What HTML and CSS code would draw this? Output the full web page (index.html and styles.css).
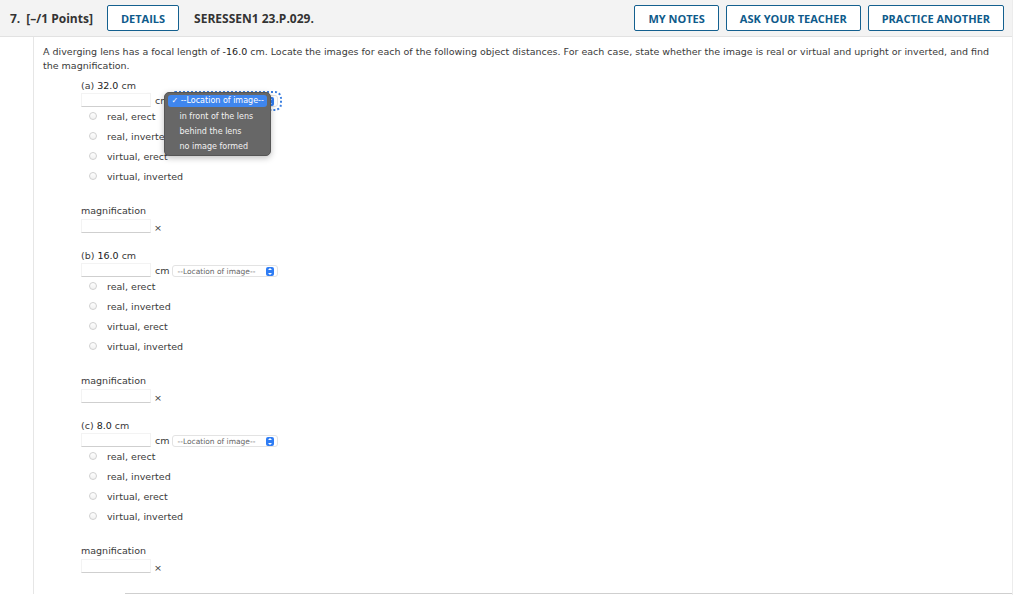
FILE: index.html
```html
<!DOCTYPE html>
<html lang="en">
<head>
  <meta charset="UTF-8" />
  <title>Question 7</title>
  <link rel="stylesheet" href="styles.css">
</head>
<body>
  <div class="page">
    <div class="qhead">
      <div class="qhead-left">
        <span class="qnum">7.</span>
        <span class="points">[&ndash;/1 Points]</span>
        <button class="btn">DETAILS</button>
        <span class="qid">SERESSEN1 23.P.029.</span>
      </div>
      <div class="qhead-right">
        <button class="btn">MY NOTES</button>
        <button class="btn">ASK YOUR TEACHER</button>
        <button class="btn">PRACTICE ANOTHER</button>
      </div>
    </div>

    <div class="qbody">
      <p class="prompt">A diverging lens has a focal length of <b class="val">-16.0</b> cm. Locate the images for each of the following object distances. For each case, state whether the image is real or virtual and upright or inverted, and find the magnification.</p>

      <div class="part">
        <div class="part-title">(a) <b class="val">32.0</b> cm</div>
        <div class="answer-row">
          <span class="field"></span>
          <span class="unit">cm</span>
          <span class="select focused">
            <span class="select-text">--Location of image--</span>
            <span class="select-icon"></span>
            <div class="menu">
              <div class="menu-item active">&#10003; --Location of image--</div>
              <div class="menu-item">in front of the lens</div>
              <div class="menu-item">behind the lens</div>
              <div class="menu-item">no image formed</div>
            </div>
          </span>
        </div>
        <ul class="choices">
          <li><span class="radio"></span>real, erect</li>
          <li><span class="radio"></span>real, inverted</li>
          <li><span class="radio"></span>virtual, erect</li>
          <li><span class="radio"></span>virtual, inverted</li>
        </ul>
        <div class="mag-label">magnification</div>
        <div class="answer-row mag-row">
          <span class="field"></span>
          <span class="unit times">&times;</span>
        </div>
      </div>

      <div class="part">
        <div class="part-title">(b) <b class="val">16.0</b> cm</div>
        <div class="answer-row">
          <span class="field"></span>
          <span class="unit">cm</span>
          <span class="select">
            <span class="select-text">--Location of image--</span>
            <span class="select-icon"></span>
          </span>
        </div>
        <ul class="choices">
          <li><span class="radio"></span>real, erect</li>
          <li><span class="radio"></span>real, inverted</li>
          <li><span class="radio"></span>virtual, erect</li>
          <li><span class="radio"></span>virtual, inverted</li>
        </ul>
        <div class="mag-label">magnification</div>
        <div class="answer-row mag-row">
          <span class="field"></span>
          <span class="unit times">&times;</span>
        </div>
      </div>

      <div class="part">
        <div class="part-title">(c) <b class="val">8.0</b> cm</div>
        <div class="answer-row">
          <span class="field"></span>
          <span class="unit">cm</span>
          <span class="select">
            <span class="select-text">--Location of image--</span>
            <span class="select-icon"></span>
          </span>
        </div>
        <ul class="choices">
          <li><span class="radio"></span>real, erect</li>
          <li><span class="radio"></span>real, inverted</li>
          <li><span class="radio"></span>virtual, erect</li>
          <li><span class="radio"></span>virtual, inverted</li>
        </ul>
        <div class="mag-label">magnification</div>
        <div class="answer-row mag-row">
          <span class="field"></span>
          <span class="unit times">&times;</span>
        </div>
      </div>

      <hr class="foot-line">
    </div>
  </div>
</body>
</html>
```

FILE: styles.css
```css
* {
  margin: 0;
  padding: 0;
  box-sizing: border-box;
}

body {
  background: #fff;
  color: #3a3a3a;
  font-family: "DejaVu Sans", Verdana, sans-serif;
  font-size: 9.5px;
  overflow: hidden;
}

.page {
  width: 1013px;
  height: 595px;
  border-right: 1px solid #ececec;
}

/* question header */
.qhead {
  height: 37px;
  background: #f3f3f3;
  border-bottom: 1px solid #e2e2e2;
  display: flex;
  justify-content: space-between;
  align-items: center;
  padding: 0 8px 0 10px;
  font-family: "Open Sans", sans-serif;
  font-weight: 700;
  font-size: 12px;
  color: #333;
}

.qhead-left,
.qhead-right {
  display: flex;
  align-items: center;
}

.qhead-right {
  gap: 7px;
}

.qnum {
  margin-right: 6px;
}

.points {
  margin-right: 14px;
}

.qid {
  margin-left: 15px;
}

.btn {
  height: 26px;
  padding: 0 13px;
  background: #fff;
  border: 1px solid #14608f;
  border-radius: 2px;
  color: #0f5b8b;
  font-family: "Open Sans", sans-serif;
  font-weight: 700;
  font-size: 11px;
}

/* question body */
.qbody {
  margin-left: 33px;
  border-left: 1px solid #e6e6e6;
  padding: 8px 0 0 9px;
  height: 557px;
}

.prompt {
  line-height: 14px;
  padding-right: 14px;
}

.val {
  font-weight: 500;
  color: #1a1a1a;
}

.part {
  margin: 6px 0 0 38px;
  padding-bottom: 10px;
}

.part-title {
  line-height: 14px;
}

.answer-row {
  display: flex;
  align-items: flex-end;
  height: 14px;
}

.field {
  display: inline-block;
  width: 70px;
  height: 14px;
  border: 1px solid #f3f3f3;
  border-bottom: 1px solid #cfcfcf;
}

.unit {
  margin-left: 4px;
  line-height: 13px;
}

.times {
  margin-left: 3px;
  line-height: 11px;
}

.select {
  position: relative;
  display: inline-flex;
  align-items: center;
  justify-content: space-between;
  width: 106px;
  height: 12px;
  margin-left: 3px;
  padding: 0 3px 0 4px;
  border: 1px solid #e3e3e3;
  border-radius: 3px;
  background: #fff;
  font-size: 7.5px;
  color: #666;
}

.select.focused {
  outline: 2px dotted #3b7fe0;
  outline-offset: 2px;
}

.select-icon {
  position: relative;
  width: 8px;
  height: 9px;
  border-radius: 2px;
  background: #2f7df4;
}

.select-icon::before,
.select-icon::after {
  content: "";
  position: absolute;
  left: 2px;
  border-left: 2px solid transparent;
  border-right: 2px solid transparent;
}

.select-icon::before {
  top: 1px;
  border-bottom: 2px solid #fff;
}

.select-icon::after {
  bottom: 1px;
  border-top: 2px solid #fff;
}

/* open native-style menu */
.menu {
  position: absolute;
  left: -9px;
  top: -4px;
  width: 107px;
  height: 64px;
  padding: 2px 3px;
  background: #676767;
  border: 1px solid #555;
  border-radius: 5px;
  box-shadow: 0 2px 6px rgba(0, 0, 0, 0.25);
  z-index: 5;
}

.menu-item {
  height: 15px;
  line-height: 14px;
  padding-left: 11px;
  color: #f2f2f2;
  font-size: 8px;
  white-space: nowrap;
}

.menu-item.active {
  height: 12px;
  line-height: 12px;
  margin-bottom: 3px;
  padding-left: 3px;
  border-radius: 3px;
  background: #3f86ee;
  color: #fff;
}

.choices {
  list-style: none;
  margin-top: -1px;
}

.choices li {
  display: flex;
  align-items: center;
  height: 20px;
  padding-left: 8px;
}

.radio {
  width: 8px;
  height: 8px;
  margin-right: 10px;
  border: 1px solid #d0d0d0;
  border-radius: 50%;
  background: linear-gradient(#fff, #f1f1f1);
}

.mag-label {
  margin-top: 18px;
  line-height: 14px;
}

.mag-row {
  height: 15px;
}

.foot-line {
  margin: 10px 0 0 82px;
  border: none;
  border-top: 1px solid #cfcfcf;
}
```
